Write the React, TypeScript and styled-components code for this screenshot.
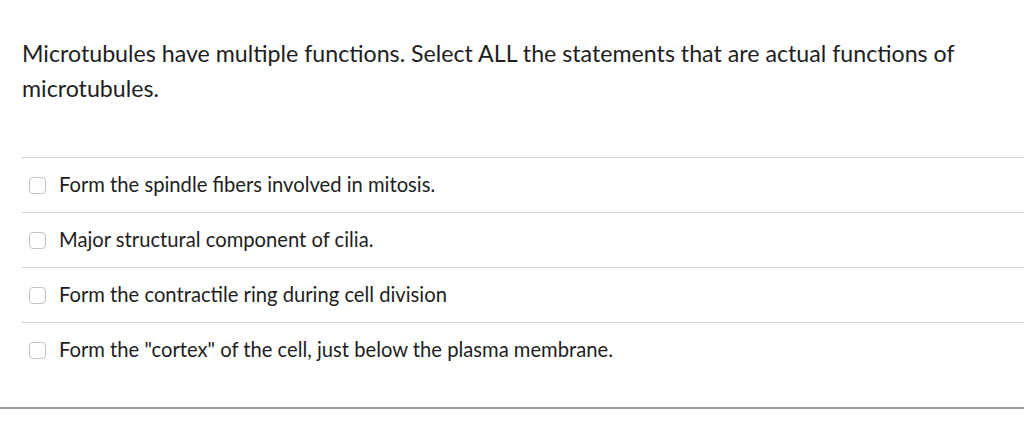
import styled, { createGlobalStyle } from 'styled-components'

const GlobalStyle = createGlobalStyle`
  body {
    margin: 0;
    background: #ffffff;
    font-family: Lato, "Open Sans", sans-serif;
    color: #222222;
  }
`

const options = [
  'Form the spindle fibers involved in mitosis.',
  'Major structural component of cilia.',
  'Form the contractile ring during cell division',
  'Form the "cortex" of the cell, just below the plasma membrane.',
]

function App() {
  return (
    <Page>
      <GlobalStyle />
      <Question>
        Microtubules have multiple functions. Select ALL the statements that are actual functions of
        microtubules.
      </Question>
      <List>
        {options.map((text) => (
          <Row key={text}>
            <Box />
            <Label>{text}</Label>
          </Row>
        ))}
      </List>
      <Footer />
    </Page>
  )
}

const Page = styled.div`
  width: 1024px;
  height: 427px;
  padding-top: 36px;
  box-sizing: border-box;
`

const Question = styled.div`
  padding: 0 30px 0 22px;
  font-size: 23.2px;
  line-height: 35px;
  color: #1e1e1e;
`

const List = styled.div`
  margin-top: 51px;
  margin-left: 22px;
`

const Row = styled.label`
  display: flex;
  align-items: center;
  height: 54px;
  border-top: 1px solid #d4d4d4;
  padding-left: 7px;
`

const Box = styled.span`
  width: 15px;
  height: 15px;
  border: 1px solid #c2c2c2;
  border-radius: 4px;
  background: #ffffff;
  flex-shrink: 0;
`

const Label = styled.span`
  margin-left: 13px;
  margin-bottom: 2px;
  font-size: 20.2px;
  color: #1e1e1e;
`

const Footer = styled.div`
  margin-top: 30px;
  border-top: 2px solid #9a9a9a;
`

export default App
